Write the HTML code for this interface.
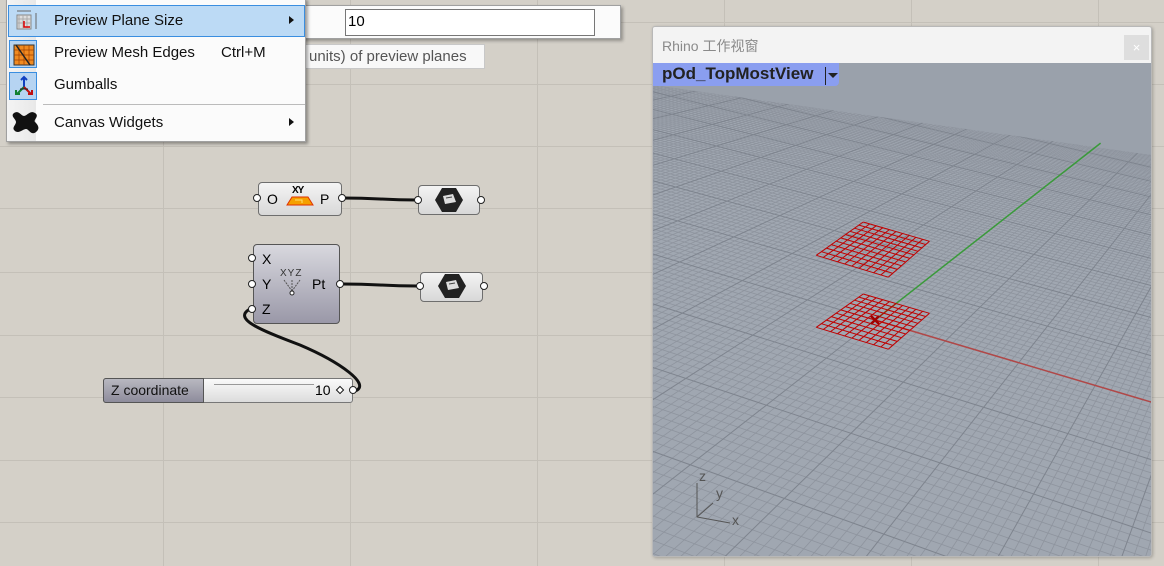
<!DOCTYPE html>
<html><head><meta charset="utf-8"><style>
*{margin:0;padding:0;box-sizing:border-box}
html,body{width:1164px;height:566px;overflow:hidden}
body{background:#d4d0c8;position:relative;font-family:"Liberation Sans","Noto Sans CJK SC",sans-serif}
.abs{position:absolute}
.menu{left:6px;top:-2px;width:300px;height:144px;background:#fbfbfb;border:1px solid #a0a0a0;box-shadow:2px 2px 3px rgba(0,0,0,.35)}
.strip{left:0;top:0;width:29px;height:142px;background:linear-gradient(90deg,#f4f4f4,#e8e8e8)}
.item{font-size:15px;color:#111}
.node{background:linear-gradient(#f4f4f4,#d8d8d8);border:1px solid #6e6e6e;border-radius:4px}
.port{width:8px;height:8px;border:1.5px solid #222;border-radius:50%;background:#fff}
</style></head><body>
<svg class="abs" style="left:0;top:0" width="1164" height="566">
<g stroke="#c4c0b8" stroke-width="1">
<line x1="163.5" y1="0" x2="163.5" y2="566"/><line x1="350.5" y1="0" x2="350.5" y2="566"/><line x1="537.5" y1="0" x2="537.5" y2="566"/><line x1="724.5" y1="0" x2="724.5" y2="566"/><line x1="911.5" y1="0" x2="911.5" y2="566"/><line x1="1098.5" y1="0" x2="1098.5" y2="566"/>
<line x1="0" y1="22.5" x2="1164" y2="22.5"/><line x1="0" y1="84.5" x2="1164" y2="84.5"/><line x1="0" y1="146.5" x2="1164" y2="146.5"/><line x1="0" y1="208.5" x2="1164" y2="208.5"/><line x1="0" y1="272.5" x2="1164" y2="272.5"/><line x1="0" y1="335.5" x2="1164" y2="335.5"/><line x1="0" y1="397.5" x2="1164" y2="397.5"/><line x1="0" y1="460.5" x2="1164" y2="460.5"/><line x1="0" y1="522.5" x2="1164" y2="522.5"/>
</g>
<g fill="none" stroke="#111" stroke-width="3">
<path d="M343 198 C380 198,380 200,417 200"/>
<path d="M343 284 C380 284,380 286,417 286"/>
<path d="M252 308 C230 318,260 330,300 345 C340 362,372 385,355 391"/>
</g>
</svg>

<div class="abs" style="left:258px;top:44px;width:227px;height:25px;background:#f8f8f8;border:1px solid #c8c8c8;font-size:15px;color:#555;padding:3px 0 0 50px">units) of preview planes</div>
<div class="abs" style="left:300px;top:5px;width:321px;height:34px;background:#fbfbfb;border:1px solid #a0a0a0;box-shadow:2px 2px 3px rgba(0,0,0,.3)">
<div class="abs" style="left:44px;top:3px;width:250px;height:27px;border:1px solid #777;background:#fff;font-size:15px;padding:3px 0 0 2px">10</div>
</div>
<div class="abs menu">
<div class="abs strip"></div>
<div class="abs" style="left:1px;top:6px;width:297px;height:32px;background:#bcdaf5;border:1px solid #3a8ee0"></div>
<svg class="abs" style="left:8px;top:9px" width="26" height="26"><rect x="2" y="7" width="14" height="14" fill="#ddd" stroke="#888"/><path d="M4 7v14M8 7v14M12 7v14M2 11h14M2 15h14" stroke="#aaa"/><path d="M9 13v6h6" stroke="#d00" stroke-width="1.5" fill="none"/><path d="M2 3h14M21 5v16" stroke="#666"/></svg>
<div class="abs item" style="left:47px;top:13px">Preview Plane Size</div>
<div class="abs" style="left:282px;top:17px;border-left:5px solid #111;border-top:4px solid transparent;border-bottom:4px solid transparent"></div>
<div class="abs" style="left:2px;top:41px;width:28px;height:28px;border:1px solid #3a8ee0;background:#b6d4f2"></div>
<svg class="abs" style="left:6px;top:45px" width="22" height="22"><rect x="1" y="1" width="20" height="20" fill="#f08a20" stroke="#333"/><path d="M6 1v20M11 1v20M16 1v20M1 6h20M1 11h20M1 16h20" stroke="#a04000" stroke-width=".7"/><path d="M3 1l14 20" stroke="#222" stroke-width="1.5"/></svg>
<div class="abs item" style="left:47px;top:45px">Preview Mesh Edges</div>
<div class="abs item" style="left:214px;top:45px">Ctrl+M</div>
<div class="abs" style="left:2px;top:73px;width:28px;height:28px;border:1px solid #3a8ee0;background:#b6d4f2"></div>
<svg class="abs" style="left:6px;top:76px" width="22" height="22"><path d="M11 12V2M8 5l3-3 3 3" stroke="#1040c0" stroke-width="2" fill="none"/><path d="M11 12L4 19M3 15v4h4" stroke="#118030" stroke-width="2" fill="none"/><path d="M11 12l7 7M15 19h4v-4" stroke="#c01010" stroke-width="2" fill="none"/><path d="M7 14h8" stroke="#222"/></svg>
<div class="abs item" style="left:47px;top:77px">Gumballs</div>
<div class="abs" style="left:36px;top:105px;width:262px;height:1px;background:#bbb"></div>
<svg class="abs" style="left:4px;top:111px" width="28" height="26"><path d="M3 3c5-3 7 3 10 3s6-6 11-3-2 7 0 9 6 6 1 10-7-3-10-3-7 5-11 2 1-6 1-9-6-6-2-9z" fill="#111"/></svg>
<div class="abs item" style="left:47px;top:115px">Canvas Widgets</div>
<div class="abs" style="left:282px;top:119px;border-left:5px solid #111;border-top:4px solid transparent;border-bottom:4px solid transparent"></div>
</div>

<div class="abs node" style="left:258px;top:182px;width:84px;height:34px"></div>
<div class="abs port" style="left:253px;top:194px"></div>
<div class="abs port" style="left:338px;top:194px"></div>
<div class="abs" style="left:267px;top:191px;font-size:14px">O</div>
<div class="abs" style="left:320px;top:191px;font-size:14px">P</div>
<div class="abs" style="left:292px;top:185px;font-size:10px;font-weight:bold;letter-spacing:-1px">XY</div>
<svg class="abs" style="left:286px;top:196px" width="28" height="10"><path d="M6 1h16l5 8H1z" fill="#f5a000" stroke="#e03000"/><path d="M9 4h7v3" stroke="#ffe070" fill="none"/></svg>
<div class="abs node" style="left:418px;top:185px;width:62px;height:30px"></div>
<div class="abs port" style="left:414px;top:196px"></div><div class="abs port" style="left:477px;top:196px"></div>
<svg class="abs" style="left:434px;top:187px" width="30" height="27"><path d="M8 1h14l7 12-7 12H8L1 13z" fill="#222"/><path d="M9 9l10-2 3 8-11 2z" fill="#ddd"/><path d="M12 11l6-1" stroke="#444"/></svg>
<div class="abs node" style="left:420px;top:272px;width:63px;height:30px"></div>
<div class="abs port" style="left:416px;top:282px"></div><div class="abs port" style="left:480px;top:282px"></div>
<svg class="abs" style="left:437px;top:273px" width="30" height="27"><path d="M8 1h14l7 12-7 12H8L1 13z" fill="#222"/><path d="M9 9l10-2 3 8-11 2z" fill="#ddd"/><path d="M12 11l6-1" stroke="#444"/></svg>
<div class="abs" style="left:253px;top:244px;width:87px;height:80px;background:linear-gradient(#d8d8de,#9a98a8);border:1px solid #555;border-radius:4px"></div>
<div class="abs port" style="left:248px;top:254px"></div><div class="abs port" style="left:248px;top:280px"></div><div class="abs port" style="left:248px;top:305px"></div><div class="abs port" style="left:336px;top:280px"></div>
<div class="abs" style="left:262px;top:251px;font-size:14px">X</div>
<div class="abs" style="left:262px;top:276px;font-size:14px">Y</div>
<div class="abs" style="left:262px;top:301px;font-size:14px">Z</div>
<div class="abs" style="left:312px;top:276px;font-size:14px">Pt</div>
<div class="abs" style="left:280px;top:268px;font-size:10px;letter-spacing:1px;color:#333">XYZ</div>
<svg class="abs" style="left:281px;top:279px" width="22" height="18"><path d="M3 1l8 11M11 1v11M19 1l-8 11" stroke="#555" stroke-dasharray="2 1"/><circle cx="11" cy="14" r="2" fill="#fff" stroke="#222"/></svg>
<div class="abs" style="left:103px;top:378px;width:250px;height:25px;background:linear-gradient(#fafafa,#dcdcdc);border:1px solid #777;border-radius:3px"></div>
<div class="abs" style="left:103px;top:378px;width:101px;height:25px;background:linear-gradient(#b8b8c0,#8e8c9c);border:1px solid #555;border-radius:3px 0 0 3px;font-size:14px;padding:3px 0 0 7px;color:#111">Z coordinate</div>
<div class="abs" style="left:214px;top:384px;width:100px;height:1px;background:#999"></div>
<div class="abs" style="left:315px;top:382px;font-size:14px">10</div>
<div class="abs" style="left:337px;top:387px;width:6px;height:6px;border:1.5px solid #111;transform:rotate(45deg);background:#fff"></div>
<div class="abs port" style="left:349px;top:386px"></div>

<div class="abs" style="left:652px;top:26px;width:500px;height:531px;background:#f3f3f3;border:1px solid #b8b8b8;border-radius:3px;box-shadow:1px 1px 3px rgba(0,0,0,.25);overflow:hidden">
<div class="abs" style="left:9px;top:9px;font-size:14px;color:#8a8a8a">Rhino 工作视窗</div>
<div class="abs" style="left:471px;top:8px;width:25px;height:25px;background:#dedede;color:#fff;font-size:13px;text-align:center;line-height:25px">×</div>
<svg id="vp" class="abs" style="left:0;top:36px" width="498" height="494"></svg>
<div class="abs" style="left:0;top:36px;width:186px;height:23px;background:#8a9ef0;border-radius:0 0 4px 0;font-size:17px;font-weight:bold;color:#222;padding:1px 0 0 9px">pOd_TopMostView</div>
<div class="abs" style="left:172px;top:40px;width:1px;height:18px;background:#222"></div>
<div class="abs" style="left:175px;top:46px;border-top:5px solid #222;border-left:5px solid transparent;border-right:5px solid transparent"></div>
</div>
<script>
(function(){
var ox=653,oy=63;
var O=[875-ox,320-oy],ex=[6.9,2.05],ey=[4.4,-3.45],k=0.0095,j=0.002;
function P(X,Y){var w=1+k*Y-j*X;return [O[0]+(ex[0]*X+ey[0]*Y)/w,O[1]+(ex[1]*X+ey[1]*Y)/w];}
var X0=-100,X1=60,Y0=-60,Y1=100;
var s='<rect width="498" height="494" fill="#9aa1ab"/>';
var g='',mj='';
function L(a,c){return '<line x1="'+a[0].toFixed(1)+'" y1="'+a[1].toFixed(1)+'" x2="'+c[0].toFixed(1)+'" y2="'+c[1].toFixed(1)+'"/>';}
for(var i=X0;i<=X1;i++){var l=L(P(i,Y0),P(i,Y1));if(i%10==0)mj+=l;else g+=l;}
for(var i=Y0;i<=Y1;i++){var l=L(P(X0,i),P(X1,i));if(i%10==0)mj+=l;else g+=l;}
var q=[P(X0,Y0),P(X1,Y0),P(X1,Y1),P(X0,Y1)];
s+='<polygon points="'+q.map(function(p){return p[0].toFixed(1)+','+p[1].toFixed(1)}).join(' ')+'" fill="#a0a7b1"/>';
s+='<g stroke="#8e949e" stroke-width="0.8">'+g+'</g><g stroke="#7e848e" stroke-width="1">'+mj+'</g>';
s+='<polygon points="0,0 0,22 498,92 498,0" fill="#9aa1ab"/>';
s+=L(P(0,0),P(X1,0)).replace('/>',' stroke="#b04848" stroke-width="1.5"/>');
s+=L(P(0,0),P(0,Y1)).replace('/>',' stroke="#3a9a3a" stroke-width="1.5"/>');
function plane(dy){var r='';for(var m=-5;m<=5;m++){var a=P(m,-5),c=P(m,5),a2=P(-5,m),c2=P(5,m);a[1]+=dy;c[1]+=dy;a2[1]+=dy;c2[1]+=dy;r+=L(a,c)+L(a2,c2);}return '<g stroke="#c00000" stroke-width="1">'+r+'</g>';}
s+=plane(0)+plane(-72);
var o=P(0,0);
s+='<path d="M'+(o[0]-4)+' '+(o[1]-4)+'l8 8m0-8l-8 8" stroke="#a00000" stroke-width="2.5"/>';
s+='<g stroke="#555" fill="none"><path d="M44 420V454L77 460M44 454L60 440"/></g><g fill="#555" font-size="14" font-family="Liberation Sans"><text x="46" y="418">z</text><text x="63" y="435">y</text><text x="79" y="462">x</text></g>';
document.getElementById('vp').innerHTML=s;
})();
</script>
</body></html>
